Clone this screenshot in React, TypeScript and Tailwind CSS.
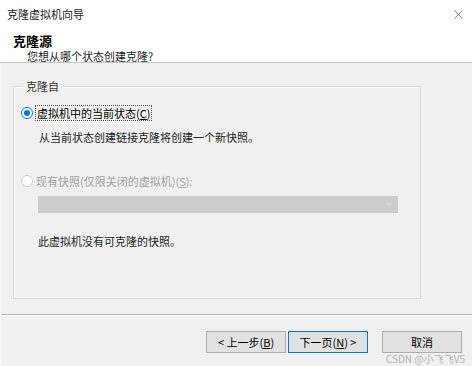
import { X, ChevronDown } from 'lucide-react'

function Radio({ checked, disabled }: { checked?: boolean; disabled?: boolean }) {
  return (
    <span
      className={
        'flex h-[12px] w-[12px] shrink-0 items-center justify-center rounded-full border bg-white ' +
        (disabled ? 'border-[#cccccc]' : 'border-[#0078d7]')
      }
    >
      {checked ? <span className="h-[6px] w-[6px] rounded-full bg-[#0078d7]" /> : null}
    </span>
  )
}

function Button({ label, keyChar, after, before, primary }: { label: string; keyChar: string; after?: string; before?: string; primary?: boolean }) {
  return (
    <button
      className={
        'flex h-[22px] w-[80px] items-center justify-center border bg-[#e1e1e1] text-[11px] leading-[14px] text-black ' +
        (primary ? 'border-[#0078d7]' : 'border-[#adadad]')
      }
    >
      {before}
      {label}
      {keyChar ? (
        <>
          (<span className="underline">{keyChar}</span>)
        </>
      ) : null}
      {after}
    </button>
  )
}

export default function App() {
  return (
    <div className="relative flex h-[366px] w-[474px] flex-col bg-white font-['Noto_Sans_CJK_SC','Liberation_Sans',sans-serif] text-black">
      {/* title bar */}
      <div className="flex h-[28px] items-center justify-between pl-[7px] pr-[8px]">
        <span className="text-[11px] text-[#222]">克隆虚拟机向导</span>
        <X size={15} strokeWidth={1} className="text-[#333]" />
      </div>

      {/* header */}
      <div className="flex h-[34px] flex-col pl-[13px]">
        <div className="mt-[5px] text-[13px] font-bold leading-[16px]">克隆源</div>
        <div className="ml-[14px] text-[11px] leading-[14px] text-[#222]">您想从哪个状态创建克隆?</div>
      </div>

      <div className="h-[1px] w-[472px] bg-[#c4c4c4]" />

      {/* body */}
      <div className="flex w-[472px] flex-1 flex-col border-l border-[#f7f7f7] bg-[#f0f0f0] pb-[2px]">
        <fieldset className="ml-[12px] mt-[16px] w-[408px] border border-[#dcdcdc] pb-[50px] pl-[7px] text-[11px] shadow-[inset_1px_1px_0_#ffffff]">
          <legend className="ml-[2px] px-[3px] leading-[14px] text-[#333]">克隆自</legend>

          <div className="mt-[12px] flex h-[16px] items-center gap-[2px]">
            <Radio checked />
            <span className="border border-dotted border-[#555] px-[1px] leading-[14px]">
              虚拟机中的当前状态(<span className="underline">C</span>)
            </span>
          </div>

          <div className="ml-[18px] mt-[9px] leading-[14px] text-[#222]">从当前状态创建链接克隆将创建一个新快照。</div>

          <div className="mt-[29px] flex h-[16px] items-center gap-[2px] text-[#a0a0a0]">
            <Radio disabled />
            <span className="px-[1px] leading-[14px]">
              现有快照(仅限关闭的虚拟机)(<span className="underline">S</span>):
            </span>
          </div>

          <div className="ml-[17px] mt-[7px] flex h-[17px] w-[360px] items-center justify-end bg-[#cccccc] pr-[3px]">
            <ChevronDown size={11} strokeWidth={1.5} className="text-[#e6e6e6]" />
          </div>

          <div className="ml-[17px] mt-[21px] leading-[14px] text-[#222]">此虚拟机没有可克隆的快照。</div>
        </fieldset>

        <div className="mt-[15px] h-[1px] w-full bg-[#b4b4b4] shadow-[0_1px_0_#ffffff]" />

        <div className="flex justify-end pr-[10px] pt-[16px]">
          <Button label="上一步" keyChar="B" before="< " />
          <div className="ml-[2px]">
            <Button label="下一页" keyChar="N" after=" >" primary />
          </div>
          <div className="ml-[14px]">
            <Button label="取消" keyChar="" />
          </div>
        </div>
      </div>

      <span className="absolute bottom-[1px] right-[9px] text-[10px] leading-[12px] text-[#b0b0b0]">CSDN @小飞飞V5</span>
    </div>
  )
}
